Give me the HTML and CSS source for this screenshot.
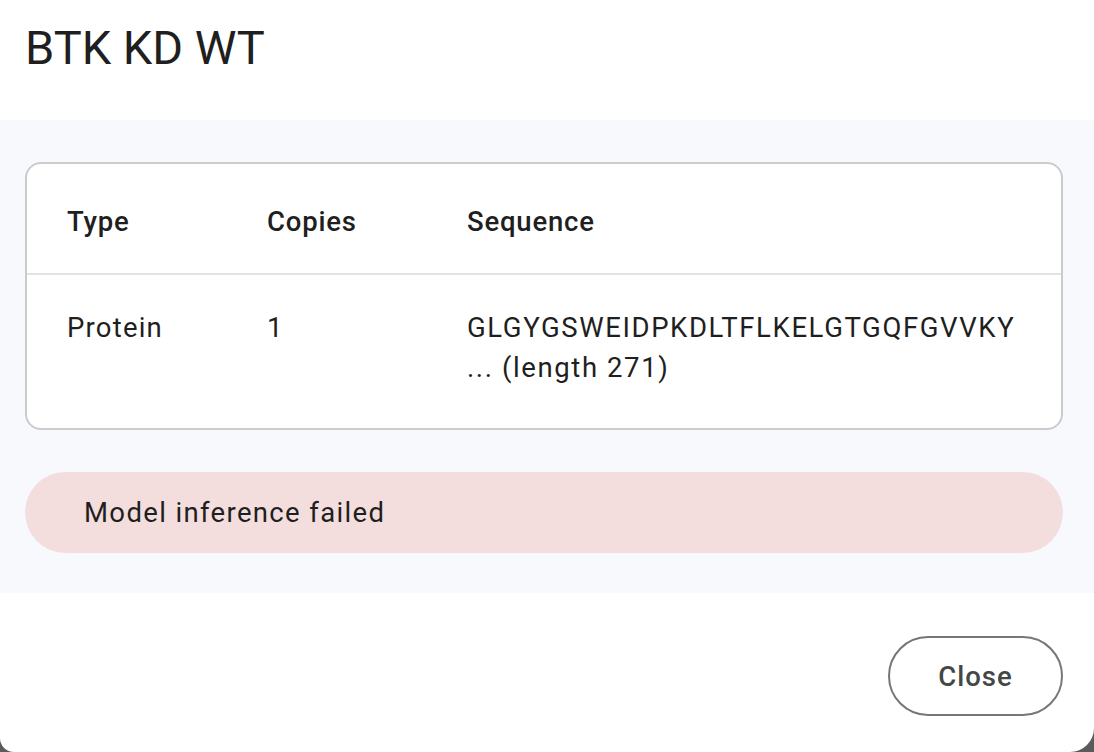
FILE: index.html
```html
<!DOCTYPE html>
<html lang="en">
<head>
<meta charset="utf-8">
<title>BTK KD WT</title>
<link rel="stylesheet" href="styles.css">
</head>
<body>
<div class="dialog">
  <header class="dialog-header">
    <h1 class="dialog-title">BTK KD WT</h1>
  </header>
  <section class="dialog-content">
    <div class="card">
      <div class="row row-head">
        <div class="cell">Type</div>
        <div class="cell">Copies</div>
        <div class="cell">Sequence</div>
      </div>
      <div class="row row-body">
        <div class="cell">Protein</div>
        <div class="cell">1</div>
        <div class="cell seq">GLGYGSWEIDPKDLTFLKELGTGQFGVVKY<br>... (length 271)</div>
      </div>
    </div>
    <div class="alert">Model inference failed</div>
  </section>
  <footer class="dialog-actions">
    <button class="btn-outline" type="button">Close</button>
  </footer>
</div>
</body>
</html>
```

FILE: styles.css
```css
html, body {
  margin: 0;
  padding: 0;
}
body {
  width: 1094px;
  height: 752px;
  overflow: hidden;
  background: #5b5b5b;
  font-family: Roboto, "Liberation Sans", sans-serif;
  color: #1f1f1f;
}
.dialog {
  width: 1094px;
  height: 752px;
  background: #ffffff;
  border-radius: 0 0 24px 14px;
  overflow: hidden;
  display: flex;
  flex-direction: column;
}
.dialog-header {
  height: 120px;
  padding: 0 25px;
  box-sizing: border-box;
}
.dialog-title {
  margin: 0;
  padding-top: 20px;
  font-size: 47px;
  font-weight: 400;
  line-height: 56px;
  color: #1f1f1f;
}
.dialog-content {
  height: 473px;
  box-sizing: border-box;
  background: #f8f9fc;
  padding: 42px 31px 40px 25px;
  display: flex;
  flex-direction: column;
  gap: 42px;
}
.card {
  height: 268px;
  box-sizing: border-box;
  background: #ffffff;
  border: 2px solid #c9cbcc;
  border-radius: 16px;
}
.row {
  display: grid;
  grid-template-columns: 200px 200px 1fr;
  padding-left: 40px;
  font-size: 27.5px;
  letter-spacing: 1.2px;
  line-height: 40px;
}
.row-head {
  height: 111px;
  box-sizing: border-box;
  padding-top: 7px;
  align-items: center;
  border-bottom: 2px solid #e1e2e3;
  font-weight: 500;
  letter-spacing: 0.8px;
}
.row-body {
  padding-top: 33px;
  color: #1f1f1f;
}
.seq {
  letter-spacing: 1.6px;
}
.alert {
  height: 81px;
  box-sizing: border-box;
  background: #f3dedd;
  border-radius: 41px;
  padding: 0 59px;
  display: flex;
  align-items: center;
  font-size: 27.5px;
  letter-spacing: 1.35px;
  color: #1f1f1f;
}
.dialog-actions {
  flex: 1;
  display: flex;
  justify-content: flex-end;
  align-items: flex-start;
  padding: 43px 31px 0 0;
}
.btn-outline {
  width: 175px;
  height: 80px;
  box-sizing: border-box;
  background: #ffffff;
  border: 2px solid #747775;
  border-radius: 40px;
  font-family: Roboto, "Liberation Sans", sans-serif;
  font-size: 27.5px;
  font-weight: 500;
  letter-spacing: 1px;
  color: #444746;
  padding: 0;
}
```
